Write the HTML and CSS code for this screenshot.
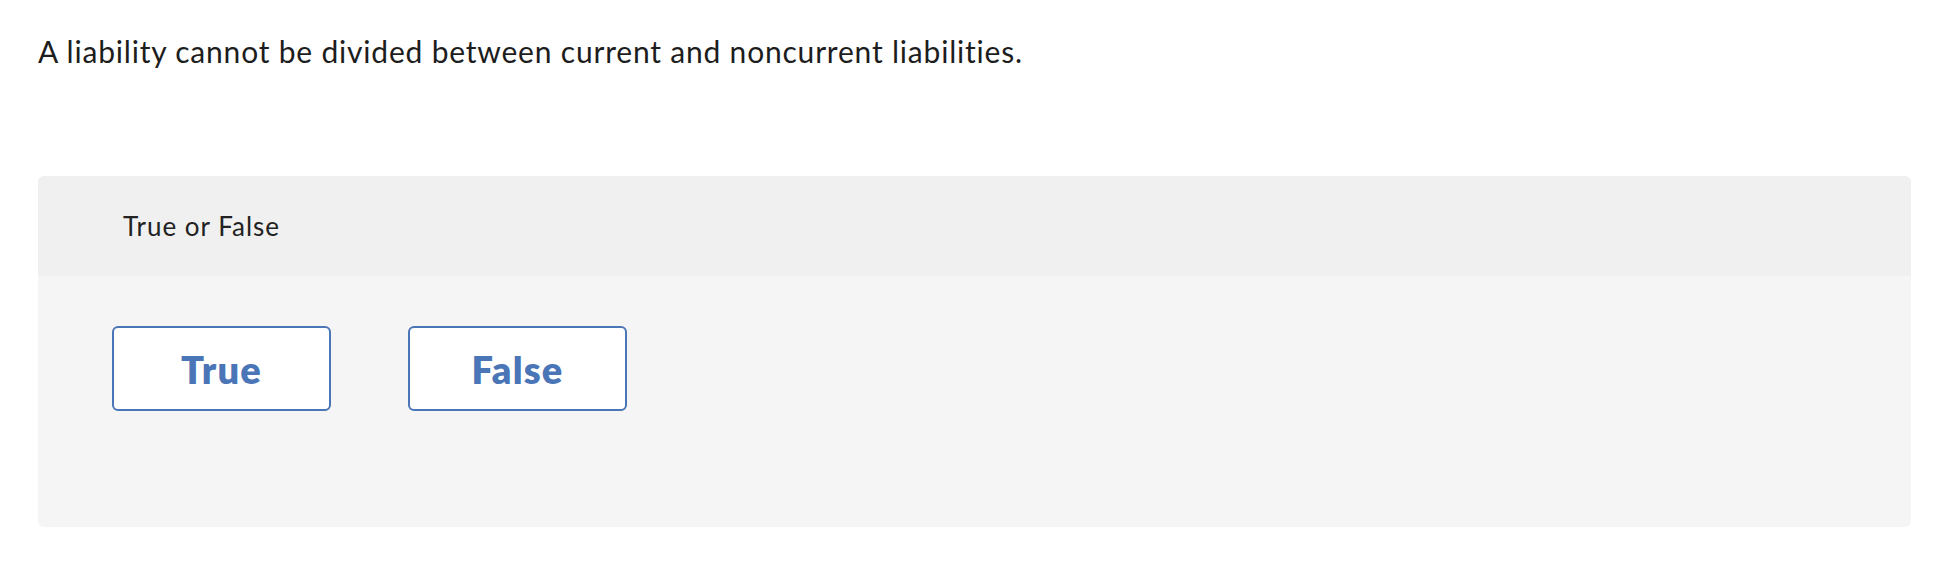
FILE: index.html
```html
<!DOCTYPE html>
<html lang="en">
<head>
<meta charset="utf-8">
<title>True or False</title>
<link rel="stylesheet" href="styles.css">
</head>
<body>
<main class="page">
  <p class="prompt">A liability cannot be divided between current and noncurrent liabilities.</p>
  <section class="question">
    <header class="question-head">True or False</header>
    <div class="question-body">
      <button class="choice" type="button">True</button>
      <button class="choice" type="button">False</button>
    </div>
  </section>
</main>
</body>
</html>
```

FILE: styles.css
```css
html, body {
  margin: 0;
  padding: 0;
  background: #ffffff;
}

.page {
  padding: 33px 25px 0 38px;
  font-family: Lato, "Open Sans", sans-serif;
  font-variant-ligatures: none;
  color: #1d1d1d;
}

.prompt {
  margin: 0;
  font-size: 30px;
  line-height: 36px;
  letter-spacing: 0.8px;
}

.question {
  margin-top: 107px;
  border-radius: 6px;
  overflow: hidden;
  background: #f5f5f5;
}

.question-head {
  background: #f0f0f0;
  padding: 34px 85px;
  font-size: 26px;
  line-height: 32px;
  letter-spacing: 1px;
  color: #222222;
}

.question-body {
  display: flex;
  gap: 77px;
  padding: 50px 74px 116px;
}

.choice {
  width: 219px;
  height: 85px;
  box-sizing: border-box;
  border: 2px solid #4a75b6;
  border-radius: 6px;
  background: #ffffff;
  color: #4a75b6;
  font-family: Lato, "Open Sans", sans-serif;
  font-variant-ligatures: none;
  font-weight: 800;
  font-size: 38px;
  letter-spacing: 1.2px;
  display: flex;
  align-items: center;
  justify-content: center;
  padding: 0;
  cursor: pointer;
}
```
